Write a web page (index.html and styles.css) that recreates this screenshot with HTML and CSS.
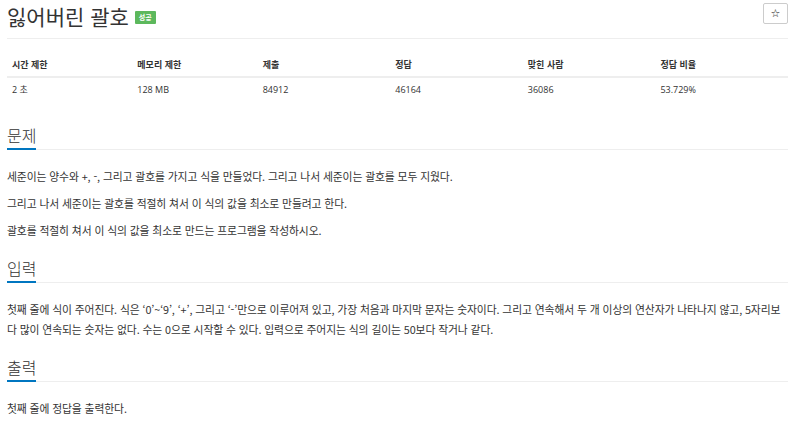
FILE: index.html
```html
<!DOCTYPE html>
<html lang="ko">
<head>
<meta charset="utf-8">
<title>잃어버린 괄호</title>
<link rel="stylesheet" href="styles.css">
</head>
<body>
<div class="page">
  <div class="header">
    <h1 class="title">잃어버린 괄호 <span class="badge">성공</span></h1>
    <button class="star" type="button">☆</button>
  </div>
  <table class="info">
    <thead>
      <tr>
        <th class="w16">시간 제한</th>
        <th class="w16">메모리 제한</th>
        <th class="w17">제출</th>
        <th class="w17">정답</th>
        <th class="w17">맞힌 사람</th>
        <th class="w17">정답 비율</th>
      </tr>
    </thead>
    <tbody>
      <tr>
        <td>2 초</td>
        <td>128 MB</td>
        <td>84912</td>
        <td>46164</td>
        <td>36086</td>
        <td>53.729%</td>
      </tr>
    </tbody>
  </table>

  <section class="section first">
    <div class="headline"><span>문제</span></div>
    <div class="content">
      <p>세준이는 양수와 +, -, 그리고 괄호를 가지고 식을 만들었다. 그리고 나서 세준이는 괄호를 모두 지웠다.</p>
      <p>그리고 나서 세준이는 괄호를 적절히 쳐서 이 식의 값을 최소로 만들려고 한다.</p>
      <p>괄호를 적절히 쳐서 이 식의 값을 최소로 만드는 프로그램을 작성하시오.</p>
    </div>
  </section>

  <section class="section">
    <div class="headline"><span>입력</span></div>
    <div class="content">
      <p>첫째 줄에 식이 주어진다. 식은 ‘0’~‘9’, ‘+’, 그리고 ‘-’만으로 이루어져 있고, 가장 처음과 마지막 문자는 숫자이다. 그리고 연속해서 두 개 이상의 연산자가 나타나지 않고, 5자리보다 많이 연속되는 숫자는 없다. 수는 0으로 시작할 수 있다. 입력으로 주어지는 식의 길이는 50보다 작거나 같다.</p>
    </div>
  </section>

  <section class="section">
    <div class="headline"><span>출력</span></div>
    <div class="content">
      <p>첫째 줄에 정답을 출력한다.</p>
    </div>
  </section>
</div>
</body>
</html>
```

FILE: styles.css
```css
html, body {
  margin: 0;
  padding: 0;
  background: #fff;
}
body {
  font-family: "Open Sans", "Noto Sans CJK KR", sans-serif;
  color: #333;
  font-size: 11px;
}
.page {
  padding: 0 12px 0 7px;
}
.header {
  display: flex;
  justify-content: space-between;
  align-items: flex-start;
  height: 38px;
  border-bottom: 1px solid #eee;
}
.title {
  margin: 0;
  padding-top: 4px;
  font-family: "Noto Sans CJK KR", sans-serif;
  font-weight: 400;
  font-size: 21px;
  line-height: 24px;
  color: #333;
  display: flex;
  align-items: center;
  gap: 6px;
}
.badge {
  display: inline-block;
  background: #5cb85c;
  color: #fff;
  font-size: 7px;
  font-weight: 700;
  line-height: 13px;
  padding: 0 4px;
  border-radius: 1px;
  margin-top: 2px;
}
.star {
  margin-top: 3px;
  width: 25px;
  height: 21px;
  padding: 0;
  background: #fff;
  border: 1px solid #ccc;
  border-radius: 2px;
  font-size: 11px;
  line-height: 19px;
  color: #111;
  font-family: "DejaVu Sans", sans-serif;
}
.info {
  width: 100%;
  margin-top: 14px;
  border-collapse: collapse;
  table-layout: fixed;
}
.w16 { width: 16%; }
.w17 { width: 17%; }
.info th {
  text-align: left;
  font-weight: 700;
  font-size: 9px;
  height: 23px;
  padding: 0 5px;
  border-bottom: 2px solid #eee;
  font-family: "Noto Sans CJK KR", sans-serif;
}
.info td {
  font-size: 9px;
  height: 22px;
  padding: 0 5px;
  vertical-align: middle;
  font-family: "Open Sans", "Noto Sans CJK KR", sans-serif;
}
.section {
  margin-top: 16px;
}
.section.first {
  margin-top: 23px;
}
.headline {
  border-bottom: 1px solid #eee;
  font-family: "Noto Sans CJK KR", sans-serif;
  font-weight: 300;
  font-size: 16px;
  line-height: 24px;
  height: 26px;
}
.headline span {
  display: inline-block;
  padding-bottom: 1px;
  border-bottom: 2px solid #0076c0;
}
.content {
  padding-top: 16px;
  font-family: "Noto Sans CJK KR", sans-serif;
}
.content p {
  margin: 0 0 7px;
  line-height: 20px;
  font-size: 10.8px;
  letter-spacing: -0.1px;
}
.content p:last-child {
  margin-bottom: 0;
}
```
